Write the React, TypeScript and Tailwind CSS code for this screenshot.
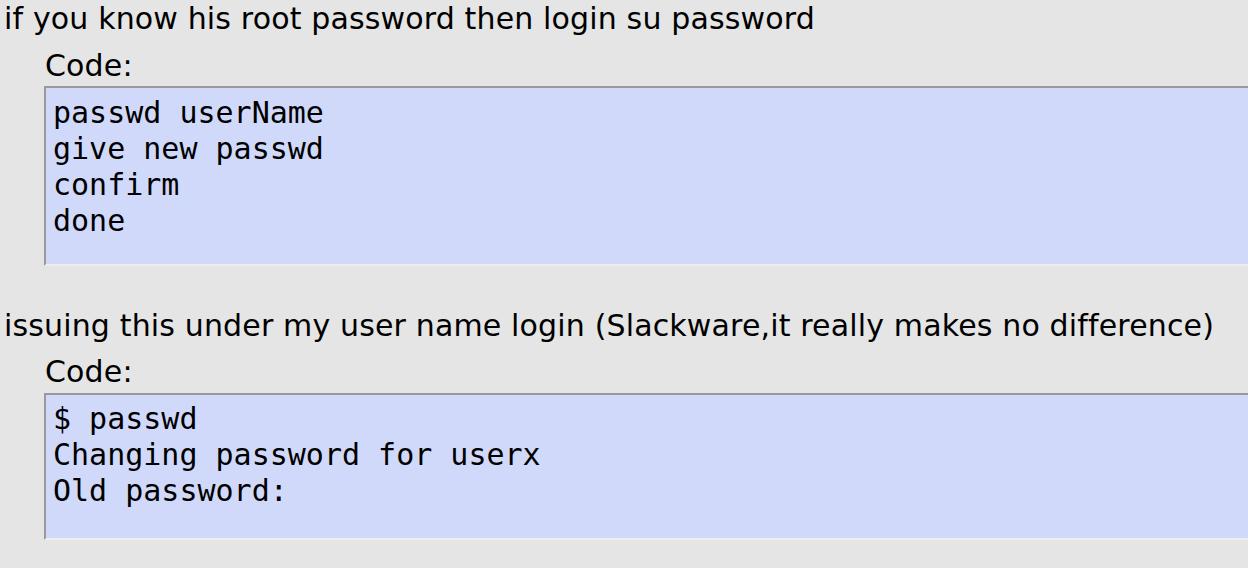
import React from 'react';

const posts = [
  {
    text: 'if you know his root password then login su password',
    code: ['passwd userName', 'give new passwd', 'confirm', 'done'],
    wrap: 'pt-[1px]',
    gap: 'mt-[11px]',
    box: 'mt-[2px] pt-[7px] pb-[25px]',
  },
  {
    text: 'issuing this under my user name login (Slackware,it really makes no difference)',
    code: ['$ passwd', 'Changing password for userx', 'Old password:'],
    wrap: 'pt-[42px]',
    gap: 'mt-[10px]',
    box: 'mt-[3px] pt-[6px] pb-[29px]',
  },
];

const App: React.FC = () => {
  return (
    <div
      className="w-[1248px] h-[568px] bg-[#e5e5e5] overflow-hidden text-black"
      style={{ fontFamily: '"DejaVu Sans", Verdana, sans-serif' }}
    >
      {posts.map((p, i) => (
        <div key={i} className={p.wrap}>
          <div className="text-[30px] leading-[36px] tracking-[0.15px] pl-[4px] whitespace-nowrap">{p.text}</div>
          <div className={`ml-[44px] -mr-4 ${p.gap}`}>
            <div className="text-[30px] leading-[36px] tracking-[0.15px] pl-[1px]">Code:</div>
            <pre
              className={`bg-[#d1d9fb] border-t-2 border-l-2 border-b-2 border-t-[#999999] border-l-[#999999] border-b-[#eeeeee] pl-[7px] ${p.box} text-[30px] leading-[36px]`}
              style={{ fontFamily: '"DejaVu Sans Mono", monospace' }}
            >
              {p.code.join('\n')}
            </pre>
          </div>
        </div>
      ))}
    </div>
  );
};

export default App;
